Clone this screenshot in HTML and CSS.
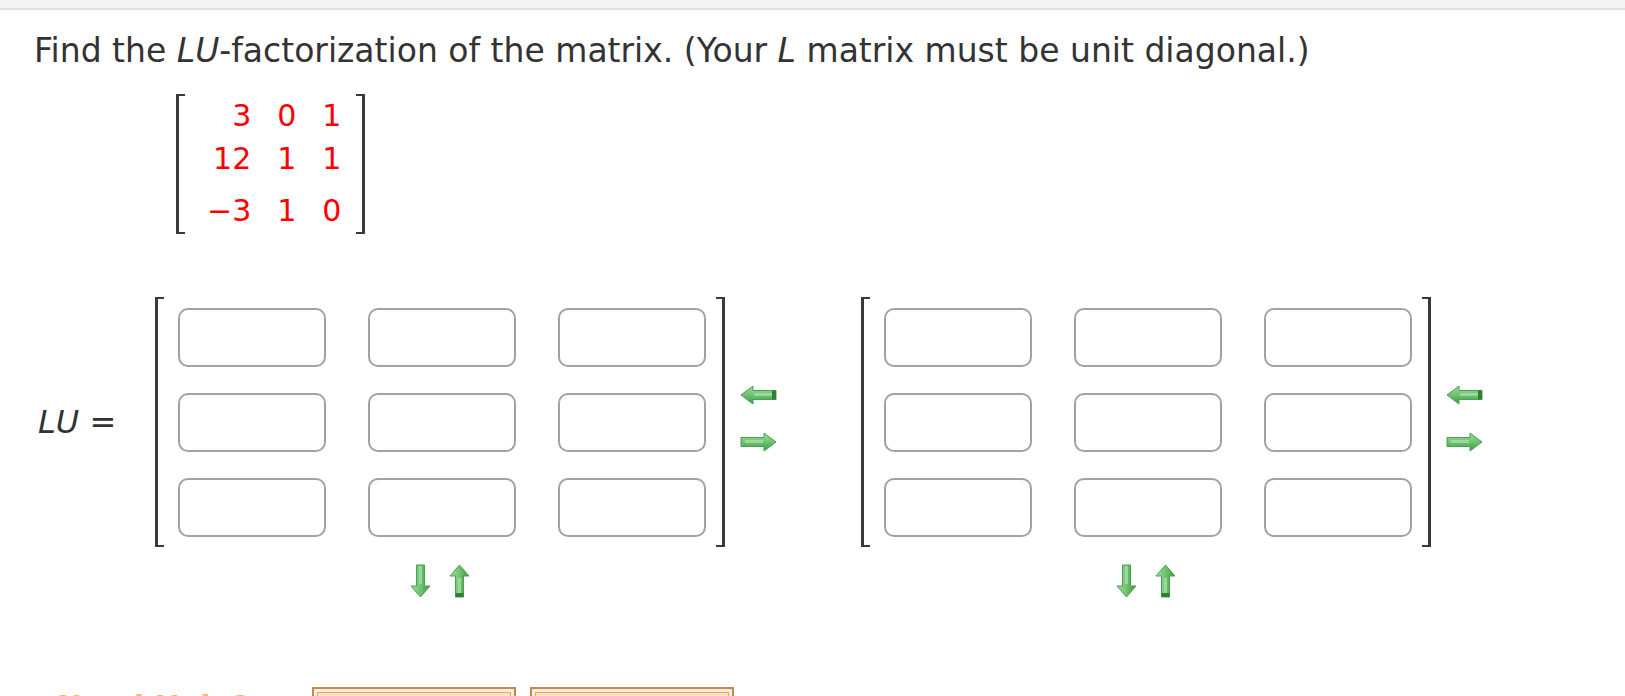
FILE: index.html
```html
<!DOCTYPE html>
<html lang="en">

<head>
    <meta charset="UTF-8">
    <title>LU-factorization</title>
    <link rel="stylesheet" href="styles.css">
</head>

<body>

    <!-- shared arrow drawings -->
    <svg class="defs" aria-hidden="true">
        <defs>
            <linearGradient id="gH" x1="0" y1="0" x2="0" y2="1">
                <stop offset="0" stop-color="#9fdc9f"/>
                <stop offset="0.5" stop-color="#6fc272"/>
                <stop offset="1" stop-color="#3f9946"/>
            </linearGradient>
            <linearGradient id="gV" x1="0" y1="0" x2="1" y2="0">
                <stop offset="0" stop-color="#9fdc9f"/>
                <stop offset="0.5" stop-color="#6fc272"/>
                <stop offset="1" stop-color="#3f9946"/>
            </linearGradient>
            <symbol id="arrow-left" viewBox="0 0 37 20">
                <path d="M1 10 L13 1 V5.5 H36 V14.5 H13 V19 Z" fill="url(#gH)" stroke="#4a9f50" stroke-width="1"/>
                <rect x="14" y="8" width="18" height="3" fill="#b5e6b5" opacity="0.6"/>
                <rect x="32" y="5.5" width="4" height="9" fill="#2f7f36"/>
            </symbol>
            <symbol id="arrow-right" viewBox="0 0 37 20">
                <path d="M36 10 L24 1 V5.5 H1 V14.5 H24 V19 Z" fill="url(#gH)" stroke="#4a9f50" stroke-width="1"/>
                <rect x="5" y="8" width="18" height="3" fill="#b5e6b5" opacity="0.6"/>
            </symbol>
            <symbol id="arrow-down" viewBox="0 0 21 34">
                <path d="M6.5 1 H14.5 V22 H20 L10.5 33 L1 22 H6.5 Z" fill="url(#gV)" stroke="#4a9f50" stroke-width="1"/>
                <rect x="9" y="2" width="3" height="18" fill="#b5e6b5" opacity="0.6"/>
            </symbol>
            <symbol id="arrow-up" viewBox="0 0 21 34">
                <path d="M10.5 1 L20 12 H14.5 V33 H6.5 V12 H1 Z" fill="url(#gV)" stroke="#4a9f50" stroke-width="1"/>
                <rect x="9" y="14" width="3" height="15" fill="#b5e6b5" opacity="0.6"/>
                <rect x="6.5" y="29" width="8" height="4" fill="#2f7f36"/>
            </symbol>
        </defs>
    </svg>

    <div class="topbar"></div>

    <p class="question">Find the <i>LU</i>-factorization of the matrix. (Your <i>L</i> matrix must be unit diagonal.)</p>

    <div class="given">
        <div class="bracket"></div>
        <div class="given-grid">
            <span class="num-r">3</span><span>0</span><span>1</span>
            <span class="num-r">12</span><span>1</span><span>1</span>
            <span class="num-r last">&minus;3</span><span class="last">1</span><span class="last">0</span>
        </div>
        <div class="bracket right"></div>
    </div>

    <div class="lu-row">
        <div class="lu-label"><i>LU</i>&nbsp;=</div>

        <div class="group">
            <div class="matrix">
                <div class="bracket"></div>
                <div class="cells">
                    <input type="text" class="cell"><input type="text" class="cell"><input type="text" class="cell">
                    <input type="text" class="cell"><input type="text" class="cell"><input type="text" class="cell">
                    <input type="text" class="cell"><input type="text" class="cell"><input type="text" class="cell">
                </div>
                <div class="bracket right"></div>
            </div>
            <div class="side-arrows">
                <svg class="arrow-h"><use href="#arrow-left"/></svg>
                <svg class="arrow-h"><use href="#arrow-right"/></svg>
            </div>
            <div class="below-arrows">
                <svg class="arrow-v"><use href="#arrow-down"/></svg>
                <svg class="arrow-v"><use href="#arrow-up"/></svg>
            </div>
        </div>

        <div class="group">
            <div class="matrix">
                <div class="bracket"></div>
                <div class="cells">
                    <input type="text" class="cell"><input type="text" class="cell"><input type="text" class="cell">
                    <input type="text" class="cell"><input type="text" class="cell"><input type="text" class="cell">
                    <input type="text" class="cell"><input type="text" class="cell"><input type="text" class="cell">
                </div>
                <div class="bracket right"></div>
            </div>
            <div class="side-arrows">
                <svg class="arrow-h"><use href="#arrow-left"/></svg>
                <svg class="arrow-h"><use href="#arrow-right"/></svg>
            </div>
            <div class="below-arrows">
                <svg class="arrow-v"><use href="#arrow-down"/></svg>
                <svg class="arrow-v"><use href="#arrow-up"/></svg>
            </div>
        </div>
    </div>

    <div class="help-row">
        <span class="help">Need Help?</span>
        <button class="btn">Read It</button>
        <button class="btn">Watch It</button>
    </div>

</body>

</html>
```

FILE: styles.css
```css
html,
body {
    overflow: hidden;
}

body {
    margin: 0;
    font-family: "DejaVu Sans", Verdana, sans-serif;
    color: #333;
    background-color: #fff;
}

.defs {
    position: absolute;
    width: 0;
    height: 0;
}

.topbar {
    height: 8px;
    background-color: #f5f5f5;
    border-bottom: 2px solid #dedede;
}

.question {
    margin: 21px 0 0 34px;
    font-size: 33px;
    line-height: 40px;
}

/* 与えられた行列 */
.given {
    display: flex;
    margin: 23px 0 0 176px;
}

.bracket {
    width: 6px;
    border: solid #3a3a3a;
    border-width: 2px 0 2px 3px;
}

.bracket.right {
    border-width: 2px 3px 2px 0;
}

.given-grid {
    display: grid;
    grid-template-columns: auto auto auto;
    column-gap: 26px;
    margin: 0 15px 0 22px;
    padding-bottom: 2px;
    color: #f00;
    font-size: 30px;
    line-height: 43px;
    text-align: center;
}

.given-grid .num-r {
    text-align: right;
}

.given-grid .last {
    padding-top: 9px;
}

/* LU 入力欄 */
.lu-row {
    display: flex;
    margin-top: 63px;
}

.lu-label {
    width: 117px;
    padding-left: 38px;
    height: 250px;
    display: flex;
    align-items: center;
    font-size: 32px;
}

.group {
    display: grid;
    grid-template-columns: auto auto;
    column-gap: 15px;
    row-gap: 17px;
    align-items: center;
}

.group + .group {
    margin-left: 84px;
}

.matrix {
    display: flex;
    height: 250px;
}

.cells {
    display: grid;
    grid-template-columns: repeat(3, 148px);
    grid-auto-rows: 59px;
    column-gap: 42px;
    row-gap: 26px;
    padding: 11px 10px 10px 14px;
}

.cell {
    box-sizing: border-box;
    width: 148px;
    height: 59px;
    margin: 0;
    border: 2px solid #a2a2a2;
    border-radius: 10px;
    background-color: #fff;
}

.side-arrows {
    display: flex;
    flex-direction: column;
    gap: 27px;
    padding-bottom: 7px;
}

.arrow-h {
    width: 37px;
    height: 20px;
}

.below-arrows {
    display: flex;
    justify-content: center;
    gap: 18px;
}

.arrow-v {
    width: 21px;
    height: 34px;
}

/* 下部のヘルプ */
.help-row {
    display: flex;
    align-items: flex-start;
    margin-top: 89px;
    padding-left: 57px;
}

.help {
    width: 255px;
    padding-top: 2px;
    color: #f5b97c;
    font-weight: bold;
    font-size: 30px;
}

.btn {
    width: 204px;
    height: 50px;
    border: 2px solid #c08a55;
    background-color: #fde0c2;
    box-shadow: inset 0 0 0 3px #feecd9, inset 0 0 0 4px #d8aa7c;
    font-family: "DejaVu Sans", Verdana, sans-serif;
    font-size: 26px;
    color: #333;
}

.btn + .btn {
    margin-left: 14px;
}
```
